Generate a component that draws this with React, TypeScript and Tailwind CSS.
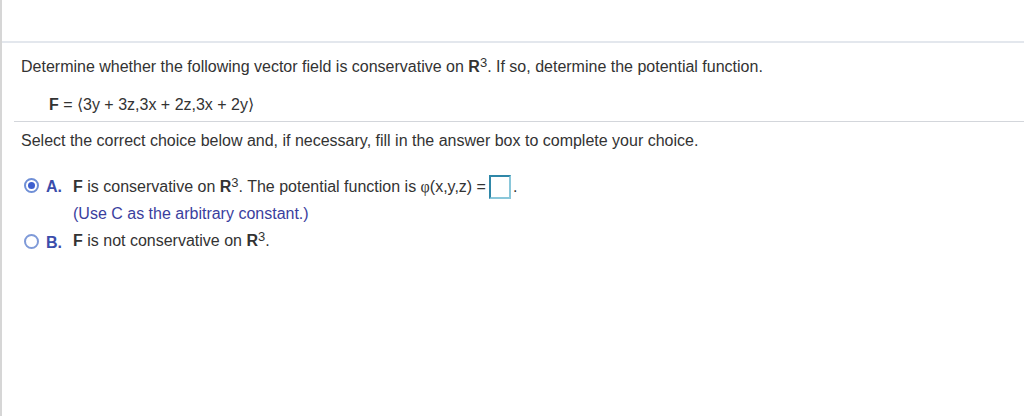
export default function App() {
  return (
    <div className="h-[416px] w-[1024px] overflow-hidden bg-white font-['Liberation_Sans',Arial,sans-serif] text-[16px] text-[#333]">
      <div className="h-full border-l-2 border-[#d6d6d6]">
        <div className="h-[41px]" />
        <div className="border-t-2 border-[#e3e7ed]">
          {/* question */}
          <div className="pl-[19px] pt-[14px]">
            <p className="leading-[20px]">
              Determine whether the following vector field is conservative on <b>R</b>
              <span className="relative -top-[5px] text-[13px]">3</span>. If so, determine the potential function.
            </p>
            <p className="mt-[17px] pl-[28px] leading-[20px]">
              <b>F</b> = ⟨3y + 3z,3x + 2z,3x + 2y⟩
            </p>
          </div>
          <div className="ml-[12px] mt-[6px] border-t border-[#d3d6db]" />

          <p className="pl-[19px] pt-[9px] leading-[20px]">
            Select the correct choice below and, if necessary, fill in the answer box to complete your choice.
          </p>

          {/* choices */}
          <div className="mt-[24px] pl-[22px]">
            <div className="flex items-start">
              <span className="mt-[3px] flex h-[15px] w-[15px] items-center justify-center rounded-full border-2 border-[#6f8fd6]">
                <span className="h-[7px] w-[7px] rounded-full bg-[#3d5fcf]" />
              </span>
              <span className="ml-[7px] w-[27px] font-bold text-[#3b4dab]">A.</span>
              <div>
                <p className="flex items-center leading-[20px]">
                  <span>
                    <b>F</b> is conservative on <b>R</b>
                    <span className="relative -top-[5px] text-[13px]">3</span>. The potential function is{" "}
                    <span className="font-['Liberation_Serif',serif]">φ</span>(x,y,z) =
                  </span>
                  <span className="ml-[3px] inline-block h-[24px] w-[22px] border-2 border-b-[#8ac7da] border-l-[#2f87a8] border-r-[#8ac7da] border-t-[#2f87a8]" />
                  <span className="ml-[2px]">.</span>
                </p>
                <p className="mt-[5px] leading-[20px] text-[#3a3e9e]">(Use C as the arbitrary constant.)</p>
              </div>
            </div>
            <div className="mt-[7px] flex items-start">
              <span className="mt-[3px] h-[15px] w-[15px] rounded-full border-2 border-[#7f9ad8]" />
              <span className="ml-[7px] w-[27px] font-bold text-[#3b4dab]">B.</span>
              <p className="leading-[20px]">
                <b>F</b> is not conservative on <b>R</b>
                <span className="relative -top-[5px] text-[13px]">3</span>.
              </p>
            </div>
          </div>
        </div>
      </div>
    </div>
  );
}
